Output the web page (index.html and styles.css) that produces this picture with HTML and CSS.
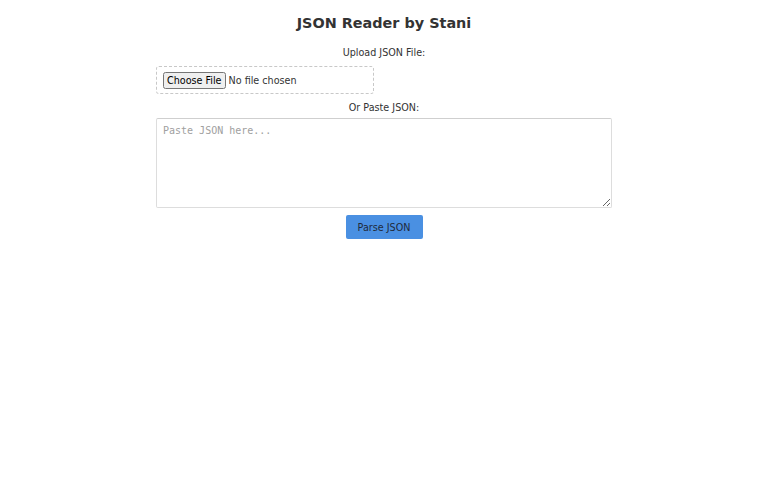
FILE: index.html
```html
<!DOCTYPE html>
<html lang="en">
<head>
<meta charset="utf-8">
<title>JSON Reader by Stani</title>
<link rel="stylesheet" href="styles.css">
</head>
<body>
  <main class="reader">
    <h1 class="reader-title">JSON Reader by Stani</h1>
    <label class="field-label" for="json-file">Upload JSON File:</label>
    <input class="file-input" id="json-file" type="file" accept=".json">
    <label class="field-label field-label--tight" for="json-text">Or Paste JSON:</label>
    <textarea class="json-text" id="json-text" placeholder="Paste JSON here..."></textarea>
    <div class="actions">
      <button class="parse-btn" type="button">Parse JSON</button>
    </div>
  </main>
</body>
</html>
```
FILE: styles.css
```css
body {
  margin: 0;
  background: #ffffff;
  font-family: "DejaVu Sans", sans-serif;
  color: #333333;
}

.reader {
  width: 456px;
  margin: 0 auto;
  padding-top: 15px;
  display: flex;
  flex-direction: column;
}

.reader-title {
  margin: 0 0 15px;
  font-size: 14.4px;
  font-weight: bold;
  text-align: center;
  color: #333333;
  line-height: 17px;
}

.field-label {
  display: block;
  text-align: center;
  font-size: 9.6px;
  line-height: 12px;
  margin-bottom: 7px;
  color: #333333;
}

.field-label--tight {
  margin-bottom: 4px;
}

.file-input {
  align-self: flex-start;
  width: 218px;
  box-sizing: border-box;
  height: 28px;
  padding: 5px 6px;
  border: 1px dashed #c8c8c8;
  border-radius: 3px;
  font-family: "DejaVu Sans", sans-serif;
  font-size: 9.6px;
  color: #333333;
  margin-bottom: 8px;
}

.file-input::file-selector-button {
  font-family: "DejaVu Sans", sans-serif;
  font-size: 9.6px;
  padding: 1px 2px;
  margin-right: 3px;
}

.json-text {
  box-sizing: border-box;
  width: 456px;
  height: 90px;
  padding: 6px;
  border: 1px solid #dddddd;
  border-top-color: #cfcfcf;
  border-radius: 2px;
  font-family: "DejaVu Sans Mono", monospace;
  font-size: 10px;
  color: #333333;
  resize: vertical;
}

.json-text::placeholder {
  color: #a0a0a0;
}

.actions {
  display: flex;
  justify-content: center;
  margin-top: 7px;
}

.parse-btn {
  width: 77px;
  height: 24px;
  border: none;
  border-radius: 2px;
  background: #4a90e2;
  color: #1f2a3a;
  font-family: "DejaVu Sans", sans-serif;
  font-size: 9.6px;
  padding: 0;
  cursor: pointer;
}
```
